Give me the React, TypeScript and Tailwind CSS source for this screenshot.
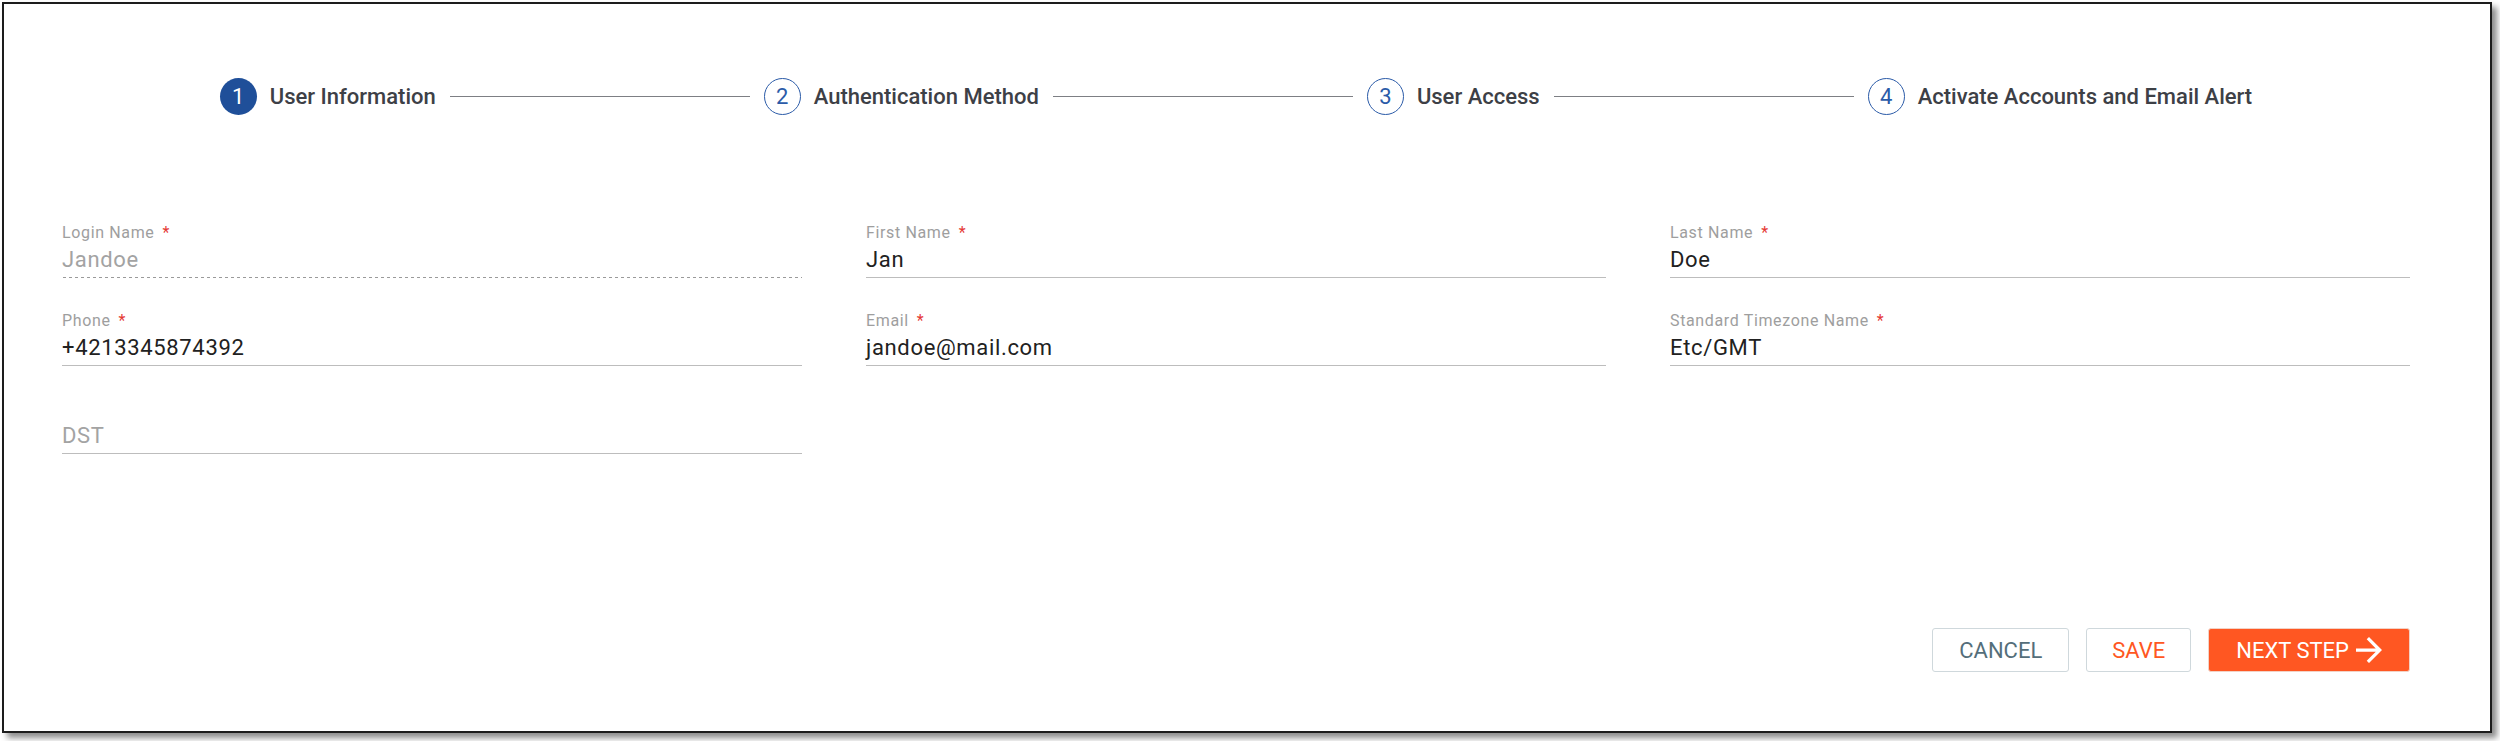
import React from 'react';

const steps = [
  { n: 1, label: 'User Information' },
  { n: 2, label: 'Authentication Method' },
  { n: 3, label: 'User Access' },
  { n: 4, label: 'Activate Accounts and Email Alert' },
];

type Field = { label?: string; value: string; required?: boolean; disabled?: boolean; placeholder?: boolean };

const fields: Field[] = [
  { label: 'Login Name', value: 'Jandoe', required: true, disabled: true },
  { label: 'First Name', value: 'Jan', required: true },
  { label: 'Last Name', value: 'Doe', required: true },
  { label: 'Phone', value: '+4213345874392', required: true },
  { label: 'Email', value: 'jandoe@mail.com', required: true },
  { label: 'Standard Timezone Name', value: 'Etc/GMT', required: true },
  { value: 'DST', placeholder: true },
];

function Stepper() {
  return (
    <div className="flex items-center justify-center h-[37px] pr-[22px]">
      {steps.map((s, i) => (
        <React.Fragment key={s.n}>
          {i > 0 && <div className="w-[300px] h-[1.5px] bg-[#7d7f84] mx-[14px]" />}
          <div className="flex items-center gap-[13px]">
            {s.n === 1 ? (
              <div className="w-[37px] h-[37px] rounded-full bg-[#1f4f99] text-white flex items-center justify-center text-[22px] leading-none">
                {s.n}
              </div>
            ) : (
              <div className="w-[37px] h-[37px] rounded-full border-[1.5px] border-[#2b5ba8] text-[#2b5ba8] flex items-center justify-center text-[22px] leading-none">
                {s.n}
              </div>
            )}
            <span className="text-[22px] font-medium text-[#3d4046] whitespace-nowrap">{s.label}</span>
          </div>
        </React.Fragment>
      ))}
    </div>
  );
}

function FormField({ f }: { f: Field }) {
  return (
    <div
      className={
        f.disabled
          ? 'pb-[4px] bg-[linear-gradient(to_right,#9a9a9a_55%,transparent_0)] bg-[length:6px_1px] bg-repeat-x bg-bottom'
          : 'pb-[3px] border-b border-[#bdbdbd]'
      }
    >
      <div className="h-[20px] leading-[20px] text-[16px] tracking-[0.04em] text-[#9e9e9e] whitespace-nowrap">
        {f.label}
        {f.required && <span className="ml-[8px] text-[#e53935]">*</span>}
      </div>
      <div
        className={`mt-[3px] h-[28px] leading-[28px] text-[22px] tracking-[0.03em] ${
          f.disabled || f.placeholder ? 'text-[#a3a3a3]' : 'text-[#212121]'
        }`}
      >
        {f.value}
      </div>
    </div>
  );
}

export default function App() {
  return (
    <div className="w-[2500px] h-[741px] bg-white font-['Roboto',sans-serif]">
      <div className="ml-[2px] mt-[2px] w-[2490px] h-[731px] border-2 border-[#1c1c1c] bg-white shadow-[5px_5px_6px_rgba(0,0,0,0.45)] flex flex-col">
        <div className="pt-[74px]">
          <Stepper />
        </div>

        <div className="mt-[108px] pl-[58px] grid grid-cols-[740px_740px_740px] gap-x-[64px] gap-y-[33px]">
          {fields.map((f, i) => (
            <FormField key={i} f={f} />
          ))}
        </div>

        <div className="mt-auto pb-[59px] pr-[80px] flex justify-end gap-[17px]">
          <button className="h-[44px] px-[26px] border border-[#cfd8dc] rounded-[3px] text-[22px] text-[#546e7a] bg-white">
            CANCEL
          </button>
          <button className="h-[44px] px-[25px] border border-[#cfd8dc] rounded-[3px] text-[22px] text-[#ff5722] bg-white">
            SAVE
          </button>
          <button className="h-[44px] pl-[27px] pr-[27px] rounded-[3px] bg-[#ff5722] text-white text-[22px] flex items-center gap-[7px] border border-[#f2d2c6]">
            NEXT STEP
            <svg width="26" height="26" viewBox="4 4 16 16" fill="currentColor">
              <path d="M12 4l-1.41 1.41L16.17 11H4v2h12.17l-5.58 5.59L12 20l8-8z" />
            </svg>
          </button>
        </div>
      </div>
    </div>
  );
}
